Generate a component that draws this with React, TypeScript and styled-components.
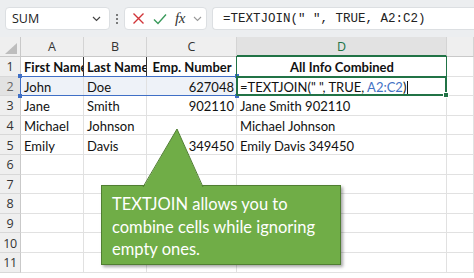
import React from 'react';
import styled, { createGlobalStyle } from 'styled-components';

const GlobalStyle = createGlobalStyle`
  html, body { margin: 0; padding: 0; background: #fff; overflow: hidden; }
  #root { width: 474px; height: 278px; }
`;

const CELL_FONT = `Lato, "Open Sans", sans-serif`;
const UI_FONT = `"Open Sans", "Noto Sans", sans-serif`;

const Frame = styled.div`
  position: relative;
  width: 474px;
  height: 278px;
  overflow: hidden;
  background: #fff;
`;

const Toolbar = styled.div`
  display: flex;
  align-items: center;
  height: 37px;
  box-sizing: border-box;
  padding: 7px 0 7px 5px;
  background: #eceef0;
`;

const Box = styled.div<{ $width?: number; $grow?: boolean }>`
  display: flex;
  align-items: center;
  height: 23px;
  box-sizing: border-box;
  background: #fff;
  border: 1px solid #dcdfe2;
  border-radius: 4px;
  ${(p) => (p.$width ? `width: ${p.$width}px;` : '')}
  ${(p) => (p.$grow ? 'flex: 1; border-right: none; border-radius: 4px 0 0 4px;' : '')}
`;

const NameText = styled.span`
  flex: 1;
  padding-left: 6px;
  font-family: ${UI_FONT};
  font-size: 12.5px;
  color: #222;
`;

const Chevron = styled.svg`
  margin-right: 8px;
`;

const Dots = styled.div`
  display: flex;
  flex-direction: column;
  gap: 2px;
  width: 14px;
  align-items: center;
  & > i { width: 2px; height: 2px; background: #555; border-radius: 1px; }
`;

const Actions = styled(Box)`
  justify-content: space-between;
  padding: 0 4px 0 7px;
  margin: 0 5px 0 0;
`;

const Fx = styled.span`
  font-family: "Liberation Serif", serif;
  font-style: italic;
  font-size: 15px;
  color: #333;
  letter-spacing: -0.5px;
`;

const FormulaText = styled.span`
  padding-left: 10px;
  font-family: "Liberation Mono", monospace;
  font-size: 12.5px;
  color: #222;
  white-space: pre;
`;

const Sheet = styled.div`
  display: grid;
  grid-template-columns: 21px 63px 63px 90px 210px 27px;
  grid-template-rows: 20px repeat(11, 19.6px);
`;

const Placed = styled.div<{ $r: number; $c: number }>`
  grid-row: ${(p) => p.$r};
  grid-column: ${(p) => p.$c};
  box-sizing: border-box;
`;

const Corner = styled(Placed)`
  position: relative;
  background: #efefef;
  border-right: 1px solid #c9c9c9;
  border-bottom: 1px solid #c9c9c9;
`;

const CornerTri = styled.svg`
  position: absolute;
  right: 3px;
  bottom: 2px;
`;

const ColHead = styled(Placed)<{ $active?: boolean }>`
  display: flex;
  align-items: center;
  justify-content: center;
  background: ${(p) => (p.$active ? '#e2e2e2' : '#efefef')};
  border-right: 1px solid #d4d4d4;
  border-bottom: ${(p) => (p.$active ? '2px solid #217346' : '1px solid #c9c9c9')};
  font-family: ${UI_FONT};
  font-size: 12.5px;
  color: ${(p) => (p.$active ? '#217346' : '#333')};
`;

const RowHead = styled(Placed)<{ $active?: boolean }>`
  display: flex;
  align-items: center;
  justify-content: center;
  padding-top: 1px;
  background: ${(p) => (p.$active ? '#e2e2e2' : '#efefef')};
  border-right: 1px solid ${(p) => (p.$active ? '#217346' : '#c9c9c9')};
  border-bottom: 1px solid #d8d8d8;
  font-family: ${UI_FONT};
  font-size: 12.5px;
  letter-spacing: -0.3px;
  color: ${(p) => (p.$active ? '#666' : '#333')};
`;

const Cell = styled(Placed)<{ $align?: 'left' | 'right' | 'center'; $bold?: boolean; $tint?: boolean; $dark?: boolean }>`
  display: flex;
  align-items: center;
  justify-content: ${(p) => (p.$align === 'right' ? 'flex-end' : p.$align === 'center' ? 'center' : 'flex-start')};
  padding: 2px 2px 0 3px;
  overflow: hidden;
  white-space: nowrap;
  background: ${(p) => (p.$tint ? '#eef2f8' : '#fff')};
  border-right: 1px solid ${(p) => (p.$dark ? '#333' : '#e1e1e1')};
  border-bottom: 1px solid #e1e1e1;
  font-family: ${CELL_FONT};
  font-size: 13px;
  font-weight: ${(p) => (p.$bold ? 700 : 400)};
  color: #111;
`;

const Ref = styled.span`
  color: #4472c4;
`;

const Caret = styled.span`
  display: inline-block;
  width: 1px;
  height: 14px;
  margin-left: 1px;
  vertical-align: -3px;
  background: #111;
`;

const Overlay = styled.div<{ $col: string; $row: string; $color: string; $w: number }>`
  grid-column: ${(p) => p.$col};
  grid-row: ${(p) => p.$row};
  position: relative;
  margin: -1px 0 0 -1px;
  border: ${(p) => `${p.$w}px solid ${p.$color}`};
  pointer-events: none;
  z-index: 2;
`;

const Handle = styled.span<{ $color: string; $pos: string }>`
  position: absolute;
  width: 4px;
  height: 4px;
  background: ${(p) => p.$color};
  ${(p) => p.$pos}
`;

const Callout = styled.div`
  position: absolute;
  left: 101px;
  top: 185px;
  width: 240px;
  height: 80px;
  box-sizing: border-box;
  padding: 7px 8px 0 10px;
  background: #70ad47;
  border: 1px solid #507e32;
  box-shadow: 2px 2px 3px rgba(0, 0, 0, 0.35);
  font-family: ${CELL_FONT};
  font-size: 16.5px;
  line-height: 22.5px;
  color: #fff;
  z-index: 3;
`;

const Pointer = styled.svg`
  position: absolute;
  left: 40px;
  top: -58px;
`;

const CalloutText = styled.div`
  position: relative;
`;

const rows: string[][] = [
  ['First Name', 'Last Name', 'Emp. Number', 'All Info Combined'],
  ['John', 'Doe', '627048', ''],
  ['Jane', 'Smith', '902110', 'Jane Smith 902110'],
  ['Michael', 'Johnson', '', 'Michael Johnson'],
  ['Emily', 'Davis', '349450', 'Emily Davis 349450'],
  ['', '', '', ''],
  ['', '', '', ''],
  ['', '', '', ''],
  ['', '', '', ''],
  ['', '', '', ''],
  ['', '', '', ''],
];

export default function App() {
  return (
    <Frame>
      <GlobalStyle />
      <Toolbar>
        <Box $width={105}>
          <NameText>SUM</NameText>
          <Chevron width="9" height="6" viewBox="0 0 9 6">
            <path d="M1 1l3.5 3.5L8 1" fill="none" stroke="#444" strokeWidth="1.2" />
          </Chevron>
        </Box>
        <Dots>
          <i />
          <i />
          <i />
        </Dots>
        <Actions $width={83}>
          <svg width="13" height="13" viewBox="0 0 13 13">
            <path d="M1.5 1.5l10 10M11.5 1.5l-10 10" stroke="#d13438" strokeWidth="1.4" fill="none" />
          </svg>
          <svg width="14" height="12" viewBox="0 0 14 12">
            <path d="M1 6.5l4 4L13 1.5" stroke="#3a9a5b" strokeWidth="1.4" fill="none" />
          </svg>
          <Fx>fx</Fx>
          <svg width="9" height="6" viewBox="0 0 9 6">
            <path d="M1 1l3.5 3.5L8 1" fill="none" stroke="#999" strokeWidth="1.1" />
          </svg>
        </Actions>
        <Box $grow>
          <FormulaText>=TEXTJOIN(" ", TRUE, A2:C2)</FormulaText>
        </Box>
      </Toolbar>
      <Sheet>
        <Corner $r={1} $c={1}>
          <CornerTri width="12" height="11" viewBox="0 0 12 11">
            <path d="M12 0V11H0Z" fill="#bdbdbd" />
          </CornerTri>
        </Corner>
        {['A', 'B', 'C', 'D', ''].map((c, i) => (
          <ColHead key={i} $r={1} $c={i + 2} $active={c === 'D'}>
            {c}
          </ColHead>
        ))}
        {rows.map((r, ri) => {
          const gr = ri + 2;
          const head = ri === 0;
          const sel = ri === 1;
          return (
            <React.Fragment key={ri}>
              <RowHead $r={gr} $c={1} $active={sel}>
                {ri + 1}
              </RowHead>
              <Cell $r={gr} $c={2} $bold={head} $tint={sel} $dark={head}>
                {r[0]}
              </Cell>
              <Cell $r={gr} $c={3} $bold={head} $tint={sel} $dark={head}>
                {r[1]}
              </Cell>
              <Cell $r={gr} $c={4} $bold={head} $tint={sel} $dark={head} $align={head ? 'center' : 'right'}>
                {r[2]}
              </Cell>
              <Cell $r={gr} $c={5} $bold={head} $align={head ? 'center' : 'left'}>
                {sel ? (
                  <span>
                    {'=TEXTJOIN(" ", TRUE, '}
                    <Ref>A2:C2</Ref>)<Caret />
                  </span>
                ) : (
                  r[3]
                )}
              </Cell>
              <Cell $r={gr} $c={6} />
            </React.Fragment>
          );
        })}
        <Overlay $col="2 / 5" $row="3" $color="#3f6fc6" $w={1}>
          <Handle $color="#3f6fc6" $pos="left: -3px; top: -3px;" />
          <Handle $color="#3f6fc6" $pos="left: -3px; bottom: -3px;" />
          <Handle $color="#3f6fc6" $pos="right: -3px; top: -3px;" />
          <Handle $color="#3f6fc6" $pos="right: -3px; bottom: -3px;" />
        </Overlay>
        <Overlay $col="5" $row="2" $color="#217346" $w={1} />
        <Overlay $col="5" $row="3" $color="#217346" $w={2}>
          <Handle $color="#217346" $pos="right: -4px; bottom: -4px; border: 1px solid #fff;" />
        </Overlay>
      </Sheet>
      <Callout>
        <Pointer width="64" height="60" viewBox="0 0 64 60">
          <path d="M1 60L35 1L61 60Z" fill="#70ad47" />
          <path d="M1 59L35 1L61 59" fill="none" stroke="#507e32" strokeWidth="1" />
        </Pointer>
        <CalloutText>
          TEXTJOIN allows you to
          <br />
          combine cells while ignoring
          <br />
          empty ones.
        </CalloutText>
      </Callout>
    </Frame>
  );
}
